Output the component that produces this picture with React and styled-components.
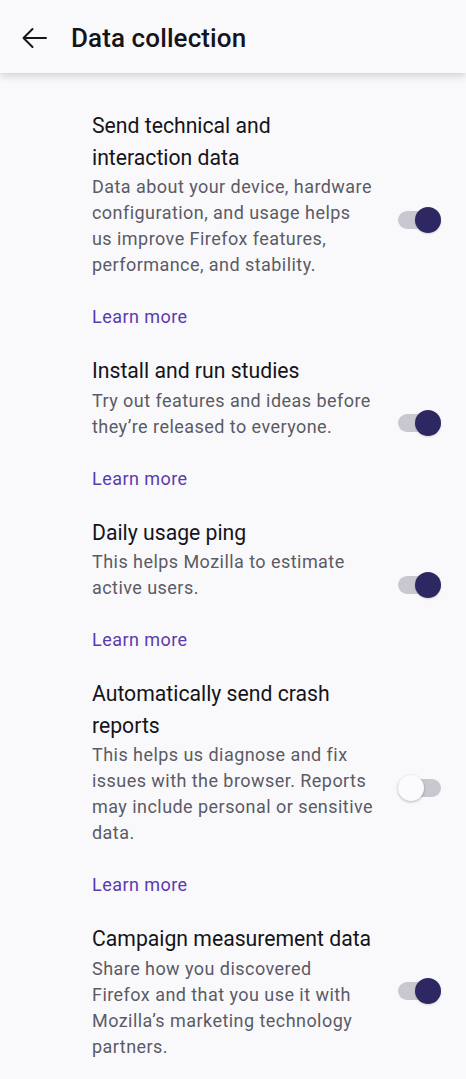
import React from "react";
import styled, { createGlobalStyle } from "styled-components";

const Global = createGlobalStyle`
  html, body { margin: 0; padding: 0; background: #f9f9fb; }
  body { font-family: Roboto, "Noto Sans", sans-serif; -webkit-font-smoothing: antialiased; }
  * { box-sizing: border-box; }
`;

const Page = styled.div`
  width: 466px;
  min-height: 1079px;
  background: #f9f9fb;
  overflow: hidden;
`;

const Toolbar = styled.header`
  position: relative;
  z-index: 1;
  height: 73px;
  display: flex;
  align-items: center;
  padding: 2px 0 0 20px;
  background: #f9f9fb;
  box-shadow: 0 3px 8px rgba(0, 0, 0, 0.16);
`;

const BackButton = styled.button`
  width: 28px;
  height: 28px;
  padding: 0;
  border: 0;
  background: transparent;
  display: flex;
  align-items: center;
  justify-content: center;
  color: #15141a;
  margin-right: 23px;
`;

const Title = styled.h1`
  margin: 0;
  font-size: 26px;
  font-weight: 500;
  color: #15141a;
  letter-spacing: 0.1px;
`;

const List = styled.main`
  padding-top: 25px;
`;

const Item = styled.section`
  display: flex;
  align-items: center;
  padding: 12px 25px 13px 92px;
`;

const TextCol = styled.div`
  flex: 1;
  min-width: 0;
`;

const ItemTitle = styled.div`
  font-size: 21.2px;
  line-height: 31.5px;
  color: #15141a;
  margin-bottom: 1px;
`;

const Summary = styled.div`
  font-size: 18px;
  line-height: 26px;
  color: #5b5b66;
  letter-spacing: 0.45px;
  white-space: nowrap;
`;

const LearnMore = styled.a`
  display: block;
  margin-top: 26px;
  font-size: 18px;
  line-height: 26px;
  color: #5b3ab0;
  letter-spacing: 0.45px;
  text-decoration: none;
`;

const Track = styled.div`
  position: relative;
  flex: none;
  width: 43px;
  height: 18px;
  border-radius: 9px;
  background: #c9c8d0;
  margin-left: 8px;
`;

const Thumb = styled.div`
  position: absolute;
  top: -4px;
  left: ${(p) => (p.$on ? "17px" : "0px")};
  width: 26px;
  height: 26px;
  border-radius: 50%;
  background: ${(p) => (p.$on ? "#2e2862" : "#fbfbfe")};
  box-shadow: ${(p) =>
    p.$on ? "0 1px 2px rgba(0,0,0,0.15)" : "0 1px 3px rgba(0,0,0,0.28)"};
`;

const Switch = ({ on }) => (
  <Track role="switch" aria-checked={on}>
    <Thumb $on={on} />
  </Track>
);

const Lines = ({ lines }) =>
  lines.map((l, i) => (
    <React.Fragment key={i}>
      {l}
      {i < lines.length - 1 && <br />}
    </React.Fragment>
  ));

const items = [
  {
    title: ["Send technical and", "interaction data"],
    desc: [
      "Data about your device, hardware",
      "configuration, and usage helps",
      "us improve Firefox features,",
      "performance, and stability.",
    ],
    learn: true,
    on: true,
  },
  {
    title: ["Install and run studies"],
    desc: ["Try out features and ideas before", "they’re released to everyone."],
    learn: true,
    on: true,
  },
  {
    title: ["Daily usage ping"],
    desc: ["This helps Mozilla to estimate", "active users."],
    learn: true,
    on: true,
  },
  {
    title: ["Automatically send crash", "reports"],
    desc: [
      "This helps us diagnose and fix",
      "issues with the browser. Reports",
      "may include personal or sensitive",
      "data.",
    ],
    learn: true,
    on: false,
  },
  {
    title: ["Campaign measurement data"],
    desc: [
      "Share how you discovered",
      "Firefox and that you use it with",
      "Mozilla’s marketing technology",
      "partners.",
    ],
    learn: false,
    on: true,
  },
];

export default function App() {
  return (
    <Page>
      <Global />
      <Toolbar>
        <BackButton aria-label="Back">
          <svg width="28" height="28" viewBox="0 0 28 28" fill="none">
            <path
              d="M26 14H3.5M12.5 5L3.5 14L12.5 23"
              stroke="#15141a"
              strokeWidth="2"
              strokeLinecap="round"
              strokeLinejoin="round"
            />
          </svg>
        </BackButton>
        <Title>Data collection</Title>
      </Toolbar>
      <List>
        {items.map((it, i) => (
          <Item key={i}>
            <TextCol>
              <ItemTitle>
                <Lines lines={it.title} />
              </ItemTitle>
              <Summary>
                <Lines lines={it.desc} />
              </Summary>
              {it.learn && <LearnMore href="#">Learn more</LearnMore>}
            </TextCol>
            <Switch on={it.on} />
          </Item>
        ))}
      </List>
    </Page>
  );
}
